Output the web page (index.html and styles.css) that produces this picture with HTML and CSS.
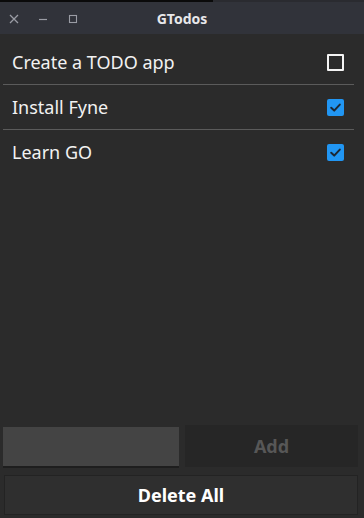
FILE: index.html
```html
<!DOCTYPE html>
<html>
<head>
<meta charset="utf-8">
<title>GTodos</title>
<link rel="stylesheet" href="styles.css">
</head>
<body>
<div class="window">
  <div class="topstrip"><div class="strip-dark"></div><div class="strip-light"></div></div>
  <header class="titlebar">
    <div class="controls">
      <span class="ctl"><svg width="10" height="10" viewBox="0 0 10 10"><path d="M1 1L9 9M9 1L1 9" stroke="#9a9ca4" stroke-width="1.3" fill="none"/></svg></span>
      <span class="ctl"><svg width="10" height="10" viewBox="0 0 10 10"><path d="M1 5.5H9" stroke="#9a9ca4" stroke-width="1.2" fill="none"/></svg></span>
      <span class="ctl"><svg width="10" height="10" viewBox="0 0 10 10"><rect x="1.5" y="1.5" width="7" height="7" stroke="#9a9ca4" stroke-width="1.1" fill="none"/></svg></span>
    </div>
    <div class="title">GTodos</div>
    <div class="spacer"></div>
  </header>
  <main class="list">
    <div class="row sep">
      <span class="label">Create a TODO app</span>
      <span class="check"></span>
    </div>
    <div class="row sep">
      <span class="label">Install Fyne</span>
      <span class="check on"><svg width="17" height="17" viewBox="0 0 17 17"><path d="M4.2 8.8L7.2 11.6L12.8 5.6" stroke="#1c2733" stroke-width="2" fill="none" stroke-linecap="round" stroke-linejoin="round"/></svg></span>
    </div>
    <div class="row">
      <span class="label">Learn GO</span>
      <span class="check on"><svg width="17" height="17" viewBox="0 0 17 17"><path d="M4.2 8.8L7.2 11.6L12.8 5.6" stroke="#1c2733" stroke-width="2" fill="none" stroke-linecap="round" stroke-linejoin="round"/></svg></span>
    </div>
  </main>
  <footer class="bottom">
    <div class="add-row">
      <div class="entry"></div>
      <button class="btn add">Add</button>
    </div>
    <button class="btn delete">Delete All</button>
  </footer>
</div>
</body>
</html>
```
FILE: styles.css
```css
* { box-sizing: border-box; }
html, body { margin: 0; padding: 0; }
body {
  background: #2b2b2b;
  font-family: "Noto Sans", "Open Sans", sans-serif;
  color: #f0f0f0;
}
.window {
  width: 364px;
  height: 518px;
  display: flex;
  flex-direction: column;
  overflow: hidden;
}
.topstrip { height: 2px; display: flex; }
.strip-dark { width: 213px; background: #0a0a0a; }
.strip-light { flex: 1; background: #2a2b30; }
.titlebar {
  height: 32px;
  background: #31333a;
  display: grid;
  grid-template-columns: 1fr auto 1fr;
  align-items: center;
}
.controls { display: flex; align-items: center; }
.ctl {
  width: 30px;
  height: 32px;
  display: flex;
  align-items: center;
  justify-content: center;
  padding-top: 2px;
}
.ctl:first-child { width: 28px; }
.title {
  font-weight: 700;
  font-size: 14px;
  color: #e8e8ea;
  padding-top: 1px;
}
.list {
  flex: 1;
  margin: 6px 10px 0 3px;
}
.row {
  height: 45px;
  display: flex;
  align-items: center;
  justify-content: space-between;
  padding: 0 10px 0 9px;
}
.row.sep { border-bottom: 1px solid #5b5b5b; }
.label {
  font-size: 18px;
  color: #f2f2f2;
  padding-bottom: 1px;
}
.check {
  width: 17px;
  height: 17px;
  border: 2px solid #f4f4f4;
  border-radius: 1px;
  display: block;
}
.check.on {
  border: none;
  background: #2196f3;
  border-radius: 2px;
}
.check svg { display: block; }
.bottom {
  padding: 0 6px 3px 3px;
  display: flex;
  flex-direction: column;
  gap: 8px;
}
.add-row {
  display: grid;
  grid-template-columns: 176px 1fr;
  gap: 6px;
  height: 42px;
  align-items: start;
}
.entry {
  margin-top: 2px;
  height: 39px;
  background: #444444;
  box-shadow: 0 2px 0 #1e1e1e;
}
.btn {
  font-family: "Noto Sans", "Open Sans", sans-serif;
  font-weight: 700;
  font-size: 18px;
  border-radius: 0;
  padding: 0;
  margin: 0;
}
.add {
  height: 42px;
  background: #262626;
  border: none;
  color: #575757;
}
.delete {
  height: 40px;
  margin-left: 1px;
  background: #2f2f2f;
  border: 1px solid #232323;
  color: #ffffff;
}
```
